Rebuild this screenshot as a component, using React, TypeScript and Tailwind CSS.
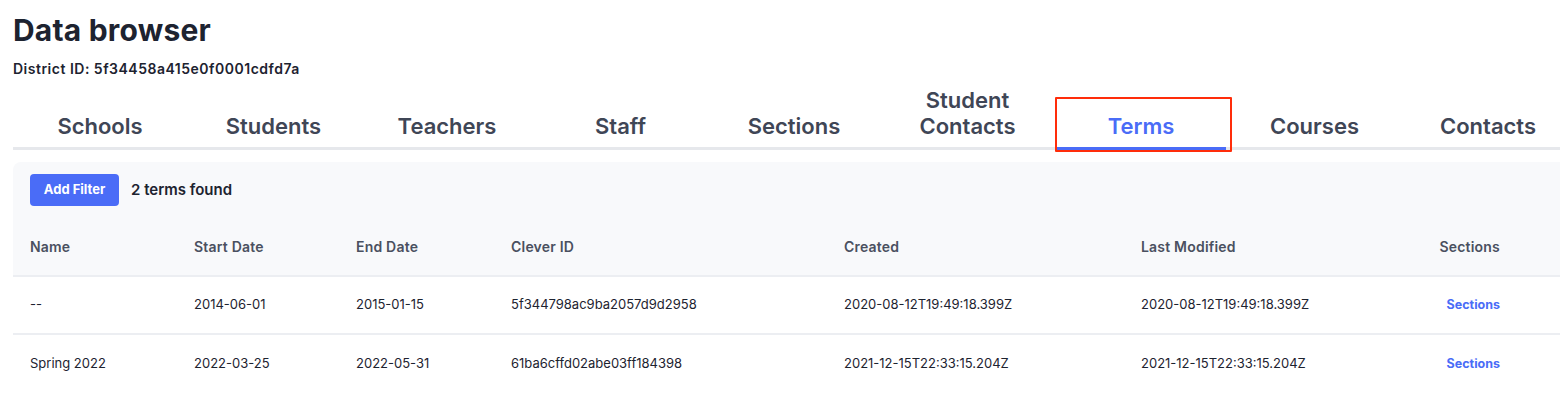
import React from 'react';

const tabs = ['Schools', 'Students', 'Teachers', 'Staff', 'Sections', 'Student Contacts', 'Terms', 'Courses', 'Contacts'];

const rows = [
  { name: '--', start: '2014-06-01', end: '2015-01-15', id: '5f344798ac9ba2057d9d2958', created: '2020-08-12T19:49:18.399Z', modified: '2020-08-12T19:49:18.399Z' },
  { name: 'Spring 2022', start: '2022-03-25', end: '2022-05-31', id: '61ba6cffd02abe03ff184398', created: '2021-12-15T22:33:15.204Z', modified: '2021-12-15T22:33:15.204Z' },
];

const cols = 'grid grid-cols-[164px_162px_155px_333px_297px_1fr_auto] items-center pl-[17px] pr-[60px]';

export default function App() {
  return (
    <main className="bg-white pl-[13px] pr-[8px] font-['Inter',sans-serif] text-[#1d2330]">
      <h1 className="pt-[12px] text-[30px] leading-[36px] font-bold tracking-[0.2px]">Data browser</h1>
      <div className="mt-[13px] text-[14px] leading-[16px] font-semibold tracking-[0.5px]">District ID: 5f34458a415e0f0001cdfd7a</div>

      {/* tab strip */}
      <nav className="mt-[10px] flex items-end gap-[3.5px] pl-[2px] border-b-[3px] border-[#e6e8ec]">
        {tabs.map((tab) => {
          const active = tab === 'Terms';
          return (
            <div
              key={tab}
              className={
                active
                  ? 'relative w-[170px] shrink-0 pb-2 text-center text-[22px] leading-[26px] font-semibold text-[#4a6cf7] border-b-[3px] border-[#4a6cf7] -mb-[3px]'
                  : 'w-[170px] shrink-0 pb-2 text-center text-[22px] leading-[26px] font-semibold text-[#3f4656]'
              }
            >
              {tab === 'Student Contacts' ? (
                <>
                  Student
                  <br />
                  Contacts
                </>
              ) : (
                tab
              )}
              {active && <span className="absolute -left-[1px] -right-[6px] -bottom-[5px] h-[55px] border-2 border-[#ff2d0a] rounded-[1px]" />}
            </div>
          );
        })}
      </nav>

      <section className="mt-[12px]">
        <div className="bg-[#f8f9fb] rounded-tl-[8px] pt-[12px]">
          <div className="flex items-center gap-[12px] pl-[17px]">
            <button className="h-[32px] w-[89px] rounded-[4px] bg-[#4a6cf7] text-[13px] font-bold text-white">Add Filter</button>
            <span className="text-[15px] font-semibold text-[#1d2330]">2 terms found</span>
          </div>
          <div className={`${cols} mt-[12px] h-[59px] border-b-2 border-[#eceef2] text-[14px] font-semibold tracking-[0.2px] text-[#4a5060]`}>
            <div>Name</div>
            <div>Start Date</div>
            <div>End Date</div>
            <div>Clever ID</div>
            <div>Created</div>
            <div>Last Modified</div>
            <div className="text-right">Sections</div>
          </div>
        </div>

        {rows.map((r, i) => (
          <div key={r.id} className={`${cols} h-[58px] text-[13px] text-[#1d2330] ${i === 0 ? 'border-b-2 border-[#eceef2]' : ''}`}>
            <div>{r.name}</div>
            <div>{r.start}</div>
            <div>{r.end}</div>
            <div>{r.id}</div>
            <div>{r.created}</div>
            <div>{r.modified}</div>
            <div className="text-right text-[12.5px] font-bold text-[#4a6cf7]">Sections</div>
          </div>
        ))}
      </section>
    </main>
  );
}
